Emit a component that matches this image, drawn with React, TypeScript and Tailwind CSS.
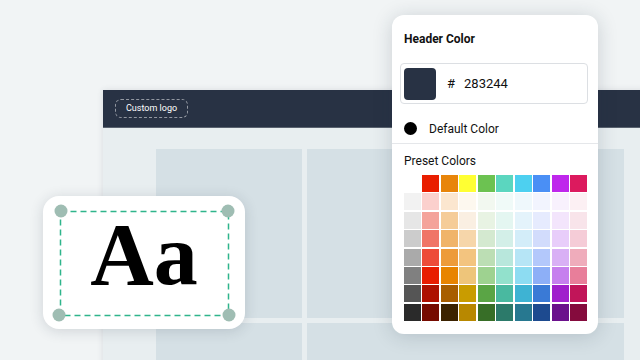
import React from 'react';

const presetRows: string[][] = [
  ['', '#e91e00', '#e8850a', '#ffff33', '#6cc251', '#5bd6bf', '#4dd0f0', '#4a8ff5', '#bf27ec', '#dc1a5e'],
  ['#f2f2f2', '#fbd0cd', '#fbe6cf', '#fdf8ef', '#f2f8f0', '#f0faf8', '#eff8fc', '#f2f4fe', '#f8f1fd', '#fcf0f3'],
  ['#e6e6e6', '#f4a39a', '#f5cc98', '#faefe2', '#e8f3e3', '#e4f6f1', '#e4f3fb', '#e6ebfe', '#f3e5fc', '#f8e4ea'],
  ['#cccccc', '#f07567', '#f0b46a', '#f6d6aa', '#d4e9d0', '#d3efe8', '#d3edf9', '#d2dcfc', '#e8cdfa', '#f5ccd7'],
  ['#aaaaaa', '#ed4b38', '#ed9b3a', '#f3c47f', '#bcdeb4', '#b8e7dc', '#b6e5f6', '#b3c8fb', '#d9b0f5', '#efacbb'],
  ['#808080', '#e81c00', '#e88400', '#eec57a', '#9ed290', '#92e1cc', '#8ddcf2', '#8daff7', '#c67fee', '#e87e9a'],
  ['#555555', '#ad1000', '#a85e00', '#c99c00', '#5aa545', '#49b9a0', '#3eb3d3', '#3a7ad6', '#a01fcc', '#c11559'],
  ['#2a2a2a', '#760b00', '#3b2200', '#b88800', '#376e27', '#2c7a6a', '#277890', '#1d4a8f', '#6b118c', '#850b3d'],
];

const SiteMock: React.FC = () => (
  <div className="pt-[90px] pl-[103px]">
    <div className="w-[560px] h-[280px] bg-[#e8eef0] flex flex-col shadow-[0_0_6px_rgba(40,50,68,0.12)]">
      <div className="h-[38px] shrink-0 bg-[#283244] border-b border-[#59626f] px-[12px] flex items-center">
        <div className="h-[19px] px-[10px] flex items-center rounded-[6px] border border-dashed border-white/50 text-white text-[9px]">
          Custom logo
        </div>
      </div>
      <div className="flex pl-[53px] pt-[21px] gap-[5px]">
        <div className="flex flex-col gap-[5px]">
          <div className="w-[146px] h-[169px] bg-[#d5e0e5]" />
          <div className="w-[146px] h-[60px] bg-[#d5e0e5]" />
        </div>
        <div className="flex flex-col gap-[5px]">
          <div className="w-[317px] h-[169px] bg-[#d5e0e5]" />
          <div className="w-[317px] h-[60px] bg-[#d5e0e5]" />
        </div>
      </div>
    </div>
  </div>
);

const ColorPopup: React.FC = () => (
  <div className="absolute left-[392px] top-[15px] w-[206px] h-[319px] rounded-[12px] bg-white shadow-[0_2px_20px_rgba(30,45,60,0.18)] text-[#111]">
    <div className="px-[12px] pt-[16px] text-[12px] leading-[16px] font-bold">Header Color</div>
    <div className="mx-[8px] mt-[16px] w-[188px] h-[41px] rounded-[4px] border border-[#dcdfe3] p-[3px] flex items-center">
      <div className="w-[32px] h-[32px] rounded-[4px] bg-[#283244]" />
      <span className="ml-[11px] text-[13px]">#</span>
      <span className="ml-[9px] text-[13px]">283244</span>
    </div>
    <div className="mt-[15px] px-[12px] flex items-center">
      <div className="w-[13px] h-[13px] rounded-full bg-black" />
      <span className="ml-[12px] text-[12px] leading-[16px] mt-[2px]">Default Color</span>
    </div>
    <div className="mt-[6px] border-t border-[#e5e7ea]" />
    <div className="px-[12px] pt-[9px] text-[12px] leading-[16px]">Preset Colors</div>
    <div className="mx-[12px] mt-[6px] w-[183px] grid grid-cols-10 gap-[1.4px]">
      {presetRows.flat().map((c, i) => (
        <div
          key={i}
          className="h-[17px]"
          style={{ backgroundColor: c || 'transparent' }}
        />
      ))}
    </div>
  </div>
);

const FontCard: React.FC = () => (
  <div className="absolute left-[43px] top-[196px] w-[202px] h-[133px] rounded-[16px] bg-white shadow-[0_2px_14px_rgba(30,45,60,0.16)]">
    <svg className="absolute left-0 top-0" width="202" height="133" viewBox="0 0 202 133">
      <rect x="17.5" y="15.5" width="168" height="104" fill="none" stroke="#2fb58b" strokeWidth="1.5" strokeDasharray="6 4" />
      <circle cx="18" cy="15" r="6.5" fill="#9fbdb3" />
      <circle cx="185" cy="15" r="6.5" fill="#9fbdb3" />
      <circle cx="16" cy="119" r="6.5" fill="#9fbdb3" />
      <circle cx="186" cy="119" r="6.5" fill="#9fbdb3" />
    </svg>
    <div className="absolute inset-0 flex items-center justify-center pb-[16px]">
      <span className="text-[88px] leading-none font-bold text-black" style={{ fontFamily: '"Liberation Serif", serif' }}>
        Aa
      </span>
    </div>
  </div>
);

export default function App() {
  return (
    <div
      className="relative w-[640px] h-[360px] overflow-hidden bg-[#f1f4f5]"
      style={{ fontFamily: 'Roboto, "Liberation Sans", sans-serif' }}
    >
      <SiteMock />
      <FontCard />
      <ColorPopup />
    </div>
  );
}
